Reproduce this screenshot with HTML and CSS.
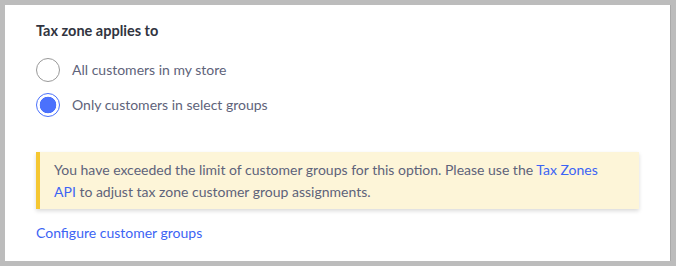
FILE: index.html
```html
<!DOCTYPE html>
<html lang="en">
<head>
    <meta charset="UTF-8">
    <meta name="viewport" content="width=device-width, initial-scale=1.0">
    <title>Tax zone</title>
    <link rel="stylesheet" href="styles.css">
</head>
<body>
    <div class="panel">
        <h2 class="field-title">Tax zone applies to</h2>

        <div class="radio-list">
            <label class="radio-row">
                <input type="radio" name="applies" value="all">
                <span class="radio-mark"></span>
                <span class="radio-label">All customers in my store</span>
            </label>
            <label class="radio-row">
                <input type="radio" name="applies" value="groups" checked>
                <span class="radio-mark"></span>
                <span class="radio-label">Only customers in select groups</span>
            </label>
        </div>

        <div class="alert">
            You have exceeded the limit of customer groups for this option. Please use the <a href="#">Tax Zones API</a> to adjust tax zone customer group assignments.
        </div>

        <a href="#" class="config-link">Configure customer groups</a>
    </div>
</body>
</html>
```

FILE: styles.css
```css
body {
    margin: 0;
    background-color: #bcbcbc;
    font-family: Lato, "Noto Sans", sans-serif;
}
.panel {
    background: white;
    margin: 5px 6px 5px 5px;
    height: 256px;
    box-sizing: border-box;
    padding: 14px 31px;
    box-shadow: 1px 0 0 #a9a9a9;
}
.field-title {
    margin: 0;
    font-size: 14.5px;
    line-height: 24px;
    font-weight: bold;
    color: #313440;
}
.radio-list {
    margin-top: 9px;
}
.radio-row {
    display: flex;
    align-items: center;
    height: 35px;
    cursor: pointer;
}
.radio-row input {
    display: none;
}
.radio-mark {
    width: 24px;
    height: 24px;
    box-sizing: border-box;
    border: 1px solid #999;
    border-radius: 50%;
    margin-right: 12px;
    background: white;
}
.radio-row input:checked + .radio-mark {
    border-color: #4b71fc;
    background: radial-gradient(circle, #4b71fc 0 8px, white 8.6px);
}
.radio-label {
    font-size: 14px;
    color: #5e637a;
}
.alert {
    margin-top: 30px;
    background: #fdf5d8;
    border-left: 4px solid #f5c732;
    padding: 7px 30px 6px 14px;
    font-size: 14px;
    line-height: 22px;
    color: #5e637a;
    box-shadow: 0 2px 4px rgba(0,0,0,0.15);
}
.alert a {
    color: #3c64f4;
    text-decoration: none;
}
.config-link {
    display: inline-block;
    margin-top: 13px;
    font-size: 14px;
    line-height: 22px;
    color: #3c64f4;
    text-decoration: none;
}
```
